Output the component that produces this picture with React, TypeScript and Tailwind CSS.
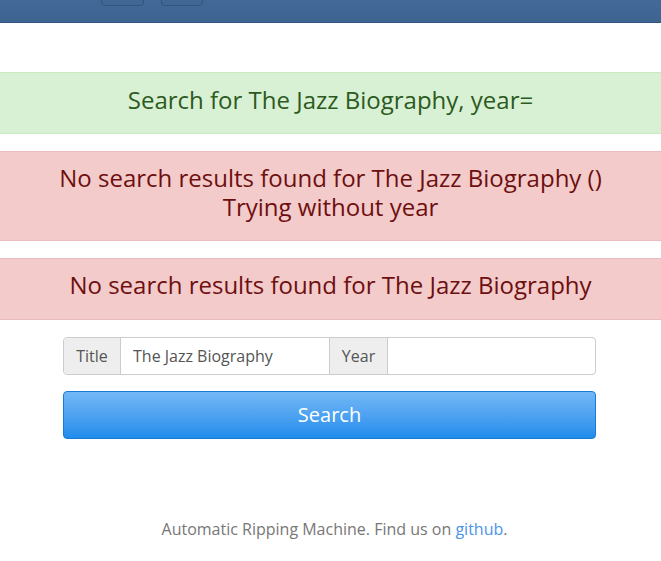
export default function App() {
  return (
    <div className="min-h-[561px] bg-white font-['Open_Sans',sans-serif] text-[#333]">
      <nav className="h-[23px] border-b border-[#2f5580] bg-gradient-to-b from-[#43699a] to-[#3d6390]">
        <div className="flex gap-[17px] pl-[101px]">
          <div className="-mt-[10px] h-[16px] w-[43px] rounded-[4px] border border-[#2f5580] bg-[#416795]" />
          <div className="-mt-[10px] h-[16px] w-[42px] rounded-[4px] border border-[#2f5580] bg-[#416795]" />
        </div>
      </nav>

      <div className="mt-[49px] flex flex-col gap-[17px]">
        <div className="border-y border-[#c9e9bf] bg-[#d8f0d4] pt-[12px] pb-[18px] text-center text-[24px] leading-[30px] text-[#2d5a1e]">
          Search for The Jazz Biography, year=
        </div>
        <div className="border-y border-[#ebbcbc] bg-[#f3cbcb] pt-[11px] pb-[19px] text-center text-[24px] leading-[29px] text-[#6e0f0f]">
          No search results found for The Jazz Biography ()
          <br />
          Trying without year
        </div>
        <div className="border-y border-[#ebbcbc] bg-[#f3cbcb] pt-[11px] pb-[19px] text-center text-[24px] leading-[30px] text-[#6e0f0f]">
          No search results found for The Jazz Biography
        </div>
      </div>

      <div className="mx-[63px] mt-[17px] w-[533px]">
        <div className="flex h-[38px] rounded-[4px] border border-[#ccc] text-[16px] text-[#555]">
          <span className="flex w-[57px] items-center justify-center rounded-l-[4px] border-r border-[#ccc] bg-[#eee]">Title</span>
          <input
            className="w-[209px] border-r border-[#ccc] px-[12px] text-[16px] text-[#555] outline-none"
            defaultValue="The Jazz Biography"
          />
          <span className="flex w-[58px] items-center justify-center border-r border-[#ccc] bg-[#eee]">Year</span>
          <input className="min-w-0 flex-1 rounded-r-[4px] px-[12px] outline-none" />
        </div>
        <button
          type="button"
          className="mt-[16px] flex h-[48px] w-full items-center justify-center rounded-[4px] border border-[#1a7bd6] bg-gradient-to-b from-[#72b8f6] to-[#1f8cec] text-[20px] text-white"
        >
          Search
        </button>
      </div>

      <footer className="mt-[78px] pl-[8px] text-center text-[16px] text-[#777]">
        Automatic Ripping Machine. Find us on <a className="text-[#4b94ea]" href="#">github</a>.
      </footer>
    </div>
  );
}
